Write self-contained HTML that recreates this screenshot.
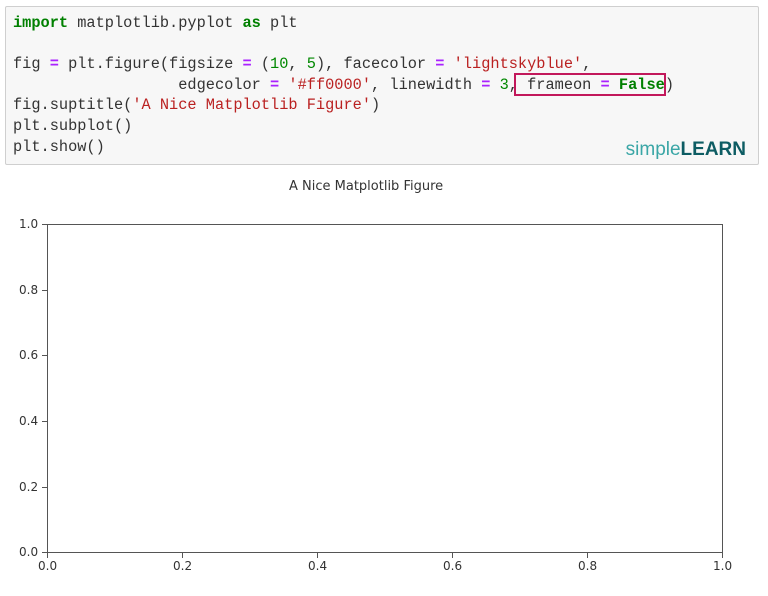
<!DOCTYPE html>
<html><head><style>
body{margin:0;width:768px;height:596px;background:#fff;position:relative;overflow:hidden;font-family:"DejaVu Sans","Liberation Sans",sans-serif}
.code{position:absolute;left:5px;top:6px;width:752px;height:157px;background:#f7f7f7;border:1px solid #cfcfcf;border-radius:2px}
pre{position:absolute;left:7px;top:6px;margin:0;font-family:"Liberation Mono",monospace;font-size:15.3px;line-height:20.6px;color:#333}
.k{color:#008000;font-weight:bold}.o{color:#aa22ff;font-weight:bold}.s{color:#ba2121}.n{color:#080}
.box{position:absolute;left:514px;top:73px;width:152px;height:23px;border:2px solid #c2185b;box-sizing:border-box}
.logo{position:absolute;right:12px;bottom:3px;font-family:"Liberation Sans",sans-serif;font-size:19px;color:#3aa6a6}
.logo b{color:#0d5c63}
.t{position:absolute;font-size:12px;color:#333}
.ax{position:absolute;left:47px;top:224px;width:676px;height:329px;border:1px solid #555;box-sizing:border-box}
.yt{position:absolute;left:42px;width:5px;height:1px;background:#555}
.xt{position:absolute;top:553px;width:1px;height:5px;background:#555}
</style></head><body>
<div class="code">
<pre><span class="k">import</span> matplotlib.pyplot <span class="k">as</span> plt

fig <span class="o">=</span> plt.figure(figsize <span class="o">=</span> (<span class="n">10</span>, <span class="n">5</span>), facecolor <span class="o">=</span> <span class="s">'lightskyblue'</span>,
                  edgecolor <span class="o">=</span> <span class="s">'#ff0000'</span>, linewidth <span class="o">=</span> <span class="n">3</span>, frameon <span class="o">=</span> <span class="k">False</span>)
fig.suptitle(<span class="s">'A Nice Matplotlib Figure'</span>)
plt.subplot()
plt.show()</pre>
<div class="logo">simple<b>LEARN</b></div>
</div>
<div class="box"></div>
<div class="t" style="left:289px;top:179px;font-size:13px">A Nice Matplotlib Figure</div>
<div class="ax"></div>
<div class="yt" style="top:224px"></div><div class="yt" style="top:290px"></div><div class="yt" style="top:355px"></div><div class="yt" style="top:421px"></div><div class="yt" style="top:487px"></div><div class="yt" style="top:552px"></div>
<div class="t" style="left:19px;top:217px">1.0</div>
<div class="t" style="left:19px;top:283px">0.8</div>
<div class="t" style="left:19px;top:348px">0.6</div>
<div class="t" style="left:19px;top:414px">0.4</div>
<div class="t" style="left:19px;top:480px">0.2</div>
<div class="t" style="left:19px;top:545px">0.0</div>
<div class="xt" style="left:47px"></div><div class="xt" style="left:182px"></div><div class="xt" style="left:317px"></div><div class="xt" style="left:452px"></div><div class="xt" style="left:587px"></div><div class="xt" style="left:722px"></div>
<div class="t" style="left:38px;top:559px">0.0</div>
<div class="t" style="left:173px;top:559px">0.2</div>
<div class="t" style="left:308px;top:559px">0.4</div>
<div class="t" style="left:443px;top:559px">0.6</div>
<div class="t" style="left:578px;top:559px">0.8</div>
<div class="t" style="left:713px;top:559px">1.0</div>
</body></html>
